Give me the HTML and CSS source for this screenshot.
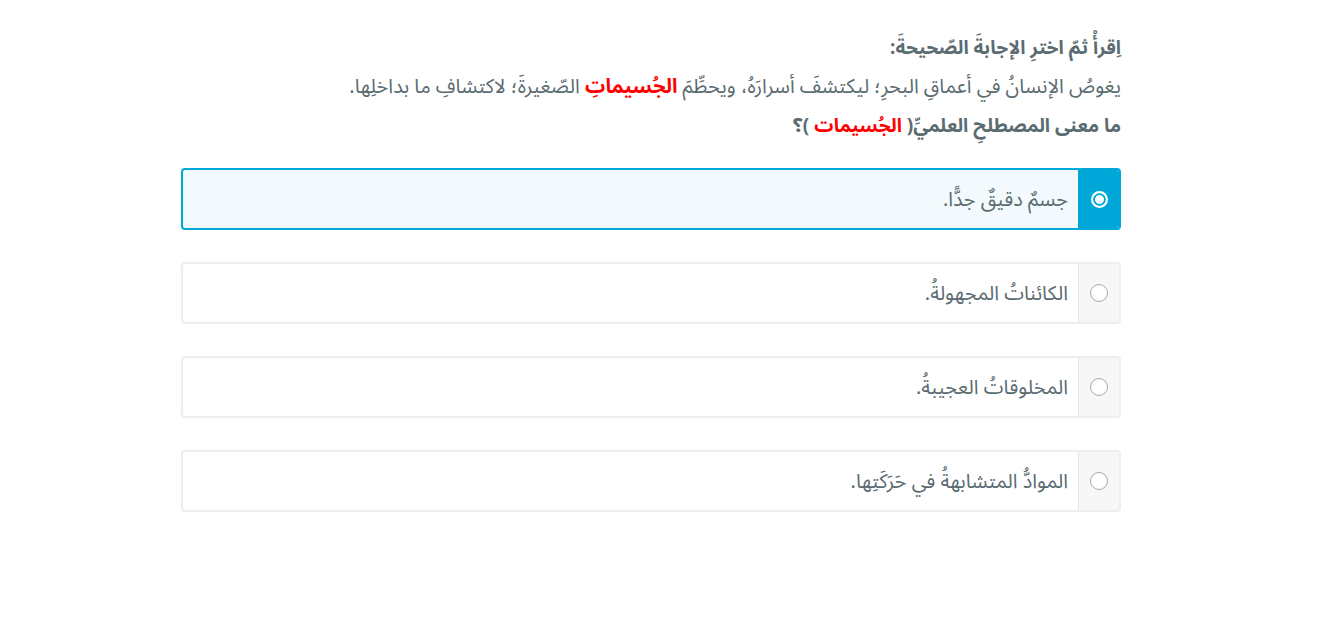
FILE: index.html
```html
<!DOCTYPE html>
<html lang="ar" dir="rtl">
<head>
<meta charset="utf-8">
<link rel="stylesheet" href="styles.css">
</head>
<body>
<div class="page">
  <div class="question">
    <p class="q-line q-bold">اِقرأْ ثمّ اخترِ الإجابةَ الصّحيحةَ:</p>
    <p class="q-line">يغوصُ الإنسانُ في أعماقِ البحرِ؛ ليكتشفَ أسرارَهُ، ويحطِّمَ <span class="hl">الجُسيماتِ</span> الصّغيرةَ؛ لاكتشافِ ما بداخلِها.</p>
    <p class="q-line q-bold">ما معنى المصطلحِ العلميِّ( <span class="hl">الجُسيمات</span> )؟</p>
  </div>
  <div class="options">
    <label class="option selected">
      <span class="radio-cell"><span class="radio"></span></span>
      <span class="opt-text">جسمٌ دقيقٌ جدًّا.</span>
    </label>
    <label class="option">
      <span class="radio-cell"><span class="radio"></span></span>
      <span class="opt-text">الكائناتُ المجهولةُ.</span>
    </label>
    <label class="option">
      <span class="radio-cell"><span class="radio"></span></span>
      <span class="opt-text">المخلوقاتُ العجيبةُ.</span>
    </label>
    <label class="option">
      <span class="radio-cell"><span class="radio"></span></span>
      <span class="opt-text">الموادُّ المتشابهةُ في حَرَكَتِها.</span>
    </label>
  </div>
</div>
</body>
</html>
```
FILE: styles.css
```css
html, body {
  margin: 0;
  padding: 0;
  background: #ffffff;
}
body {
  font-family: "Noto Sans Arabic", "Noto Naskh Arabic", "DejaVu Sans", sans-serif;
  color: #5a6c71;
}
.page {
  width: 940px;
  margin-right: 222px;
  padding-top: 29px;
}
.question {
  display: flex;
  flex-direction: column;
}
.q-line {
  margin: 0;
  font-size: 20px;
  line-height: 39px;
}
.q-bold {
  font-size: 19px;
  font-weight: bold;
}
.hl {
  color: #ff0000;
  font-weight: bold;
}
.options {
  display: flex;
  flex-direction: column;
  gap: 32px;
  margin-top: 22px;
}
.option {
  display: flex;
  align-items: stretch;
  height: 62px;
  box-sizing: border-box;
  border: 2px solid #eeeeee;
  border-radius: 4px;
  background: #ffffff;
  overflow: hidden;
}
.option.selected {
  border-color: #00a8d9;
  background: #f2fafd;
}
.radio-cell {
  width: 40px;
  flex: none;
  display: flex;
  align-items: center;
  justify-content: center;
  background: #f7f7f7;
  border-left: 1px solid #e6e6e6;
}
.selected .radio-cell {
  background: #00a8d9;
  border-left-color: #00a8d9;
}
.radio {
  width: 18px;
  height: 18px;
  box-sizing: border-box;
  border-radius: 50%;
  border: 1px solid #a8a8a8;
  background: #ffffff;
}
.selected .radio {
  width: 17px;
  height: 17px;
  border: 2px solid #ffffff;
  background: #ffffff;
  box-shadow: inset 0 0 0 2px #00a8d9;
}
.opt-text {
  display: flex;
  align-items: center;
  padding-right: 10px;
  padding-top: 2px;
  font-size: 20px;
}
```
